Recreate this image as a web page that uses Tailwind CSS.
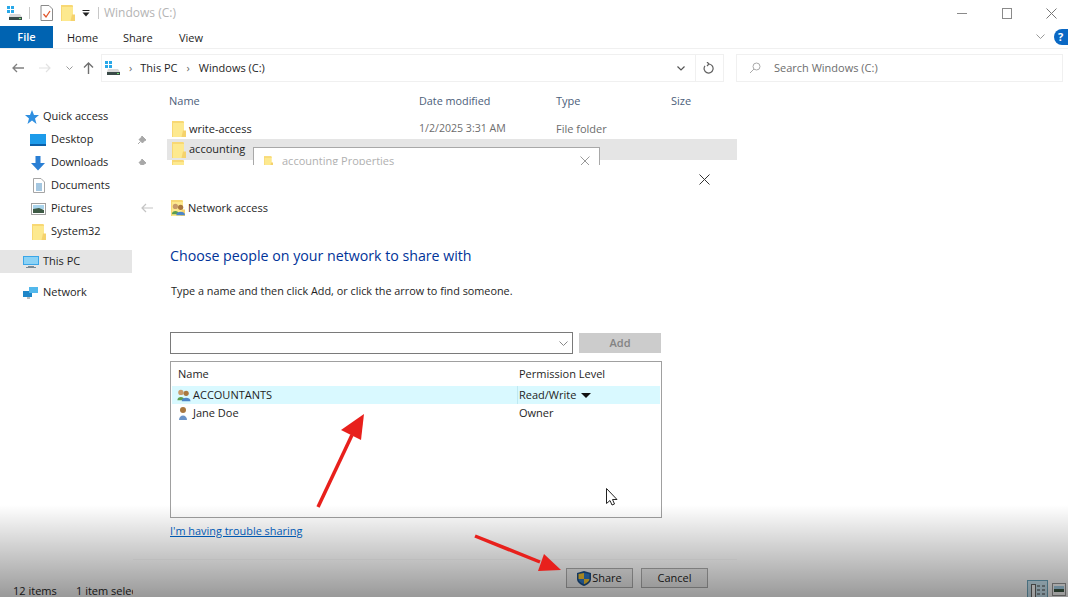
<!DOCTYPE html>
<html lang="en">
<head>
<meta charset="UTF-8">
<title>Windows (C:)</title>
<script src="https://cdn.jsdelivr.net/npm/@tailwindcss/browser@4"></script>
</head>
<body class="bg-white">
<svg class="hidden">
  <defs>
    <symbol id="folder" viewBox="0 0 14 16"><path d="M0 0H11L12 1V16H0Z" fill="#fde98f"/><path d="M0 0H11L12 1V2H1V16H0Z" fill="#f8d874"/><path d="M9.500 16H14V9.500H11Z" fill="#f5d26c"/></symbol>
    <symbol id="drive" viewBox="0 0 16 16"><rect x="0" y="1" width="3" height="3" fill="#29a8e8"/><rect x="4" y="1" width="3" height="3" fill="#29a8e8"/><rect x="0" y="5" width="3" height="3" fill="#29a8e8"/><rect x="4" y="5" width="3" height="3" fill="#29a8e8"/><path d="M3 9H13L15 12V15H2V12Z" fill="#d8d8d8"/><rect x="2" y="12" width="13" height="3" fill="#3a4a48"/><rect x="12" y="13" width="2" height="1" fill="#6fe06f"/></symbol>
    <symbol id="people" viewBox="0 0 16 16"><circle cx="5" cy="5" r="3" fill="#c79a6a"/><path d="M1 14C1 9 9 9 9 14Z" fill="#5d9e4e"/><circle cx="11" cy="6" r="3" fill="#a9773f"/><path d="M6 15C6 10 16 10 16 15Z" fill="#4d86c8"/></symbol>
  </defs>
</svg>

<div class="relative w-[1068px] h-[597px] overflow-hidden font-['Open_Sans','Noto_Sans',sans-serif] text-[11px] text-[#1e1e1e]">

  <!-- explorer window -->
  <div class="flex flex-col h-full">
    <!-- title bar -->
    <div class="h-[26px] flex items-center pl-[7px] shrink-0">
      <svg class="w-[16px] h-[16px]"><use href="#drive"/></svg>
      <div class="w-px h-[12px] bg-[#c8c8c8] ml-[6px]"></div>
      <svg class="w-[13px] h-[16px] ml-[10px]" viewBox="0 0 13 16"><path d="M1 .5H9L12.500 4V15.500H1Z" fill="#fff" stroke="#8a8a8a"/><path d="M3.500 9L6 12L10 6" fill="none" stroke="#e0562b" stroke-width="1.300"/></svg>
      <svg class="w-[14px] h-[16px] ml-[8px]"><use href="#folder"/></svg>
      <svg class="w-[8px] h-[7px] ml-[7px]" viewBox="0 0 8 7"><rect x="0.500" y="0" width="7" height="1" fill="#222"/><path d="M0.500 2.500H7.500L4 6.500Z" fill="#222"/></svg>
      <div class="w-px h-[12px] bg-[#c8c8c8] ml-[8px]"></div>
      <span class="ml-[5px] text-[#b4b4b4] text-[12px]">Windows (C:)</span>
      <div class="ml-auto flex items-center">
        <div class="w-[10px] h-px bg-[#8a8a8a] mr-[35px]"></div>
        <div class="w-[10px] h-[11px] border border-[#8a8a8a] mr-[34px]"></div>
        <svg class="w-[11px] h-[11px] mr-[11px]" viewBox="0 0 11 11"><path d="M0.500 0.500L10.500 10.500M10.500 0.500L0.500 10.500" stroke="#777" fill="none"/></svg>
      </div>
    </div>
    <!-- ribbon tabs -->
    <div class="h-[23px] flex items-center border-b border-[#f0f0f0] shrink-0">
      <div class="w-[53px] h-[22px] pt-px bg-[#0063b1] text-white font-semibold flex items-center justify-center">File</div>
      <span class="ml-[14px] mt-[2px] w-[56px]">Home</span>
      <span class="mt-[2px] w-[56px]">Share</span>
      <span class="mt-[2px]">View</span>
      <svg class="ml-auto w-[9px] h-[6px] mr-[9px]" viewBox="0 0 9 6"><path d="M.5 .5L4.500 4.500L8.500 .5" fill="none" stroke="#999"/></svg>
      <div class="w-[14px] h-[16px] rounded-l-full bg-[#0a68c4] text-white text-[11px] font-bold pl-[4px] leading-[16px]">?</div>
    </div>
    <!-- address bar -->
    <div class="h-[28px] mt-[5px] flex items-center shrink-0">
      <svg class="w-[12px] h-[10px] ml-[12px]" viewBox="0 0 12 10"><path d="M12 5H1M5 1L1 5L5 9" fill="none" stroke="#808080" stroke-width="1.300"/></svg>
      <svg class="w-[12px] h-[10px] ml-[15px]" viewBox="0 0 12 10"><path d="M0 5H11M7 1L11 5L7 9" fill="none" stroke="#e2e2e2" stroke-width="1.200"/></svg>
      <svg class="w-[7px] h-[5px] ml-[15px]" viewBox="0 0 7 5"><path d="M.5 .5L3.500 3.500L6.500 .5" fill="none" stroke="#999"/></svg>
      <svg class="w-[11px] h-[12px] ml-[10px]" viewBox="0 0 11 12"><path d="M5.500 12V1M1 5.500L5.500 1L10 5.500" fill="none" stroke="#707070" stroke-width="1.400"/></svg>
      <div class="ml-[7px] w-[623px] h-[28px] border border-[#f0f0f0] flex items-center pl-[3px]">
        <svg class="w-[16px] h-[16px]"><use href="#drive"/></svg>
        <span class="ml-[8px] text-[#666]">›</span>
        <span class="ml-[8px]">This PC</span>
        <span class="ml-[9px] text-[#666]">›</span>
        <span class="ml-[9px]">Windows (C:)</span>
        <svg class="ml-auto w-[8px] h-[5px]" viewBox="0 0 8 5"><path d="M.5 .5L4 4L7.500 .5" fill="none" stroke="#555" stroke-width="1.200"/></svg>
        <div class="w-px h-[26px] bg-[#f0f0f0] ml-[10px]"></div>
        <svg class="w-[11px] h-[12px] ml-[7px] mr-[9px]" viewBox="0 0 11 12"><path d="M5.500 2A4.500 4.500 0 1 1 2 3.800M4 0L6 2L4 4" fill="none" stroke="#606060" stroke-width="1.200"/></svg>
      </div>
      <div class="ml-[12px] w-[327px] h-[28px] border border-[#f0f0f0] flex items-center pl-[12px] text-[#6d6d6d]">
        <svg class="w-[12px] h-[12px]" viewBox="0 0 12 12"><circle cx="7.500" cy="4.500" r="3.500" fill="none" stroke="#aaa"/><path d="M5 7L1 11" stroke="#aaa"/></svg>
        <span class="ml-[13px]">Search Windows (C:)</span>
      </div>
    </div>
    <!-- body -->
    <div class="flex flex-1 min-h-0">
      <!-- sidebar -->
      <div class="w-[167px] shrink-0 pt-[23px]">
        <div class="h-[23px] flex items-center pl-[25px]">
          <svg class="w-[14px] h-[14px]" viewBox="0 0 14 14"><path d="M7 0L9 5H14L10 8.500L11.500 14L7 10.500L2.500 14L4 8.500L0 5H5Z" fill="#2f8fe0"/></svg>
          <span class="ml-[4px]">Quick access</span>
        </div>
        <div class="h-[23px] flex items-center pl-[30px]">
          <div class="w-[16px] h-[12px] bg-[#1d9bea] border-b-2 border-[#0b5fa8]"></div>
          <span class="ml-[5px] w-[86px]">Desktop</span>
          <svg class="w-[10px] h-[10px]" viewBox="0 0 10 10"><path d="M5 1L9 5L7 6L5.500 8L2 4.500L4 3ZM3.500 6.500L1 9" fill="#a8a8a8" stroke="#a8a8a8"/></svg>
        </div>
        <div class="h-[23px] flex items-center pl-[30px]">
          <svg class="w-[16px] h-[16px]" viewBox="0 0 16 16"><path d="M5.500 1H10.500V8H15L8 15.500L1 8H5.500Z" fill="#2a7fd4"/></svg>
          <span class="ml-[5px] w-[86px]">Downloads</span>
          <svg class="w-[10px] h-[10px]" viewBox="0 0 10 10"><path d="M5 1L9 5L7 6L5.500 8L2 4.500L4 3ZM3.500 6.500L1 9" fill="#a8a8a8" stroke="#a8a8a8"/></svg>
        </div>
        <div class="h-[23px] flex items-center pl-[33px]">
          <svg class="w-[12px] h-[15px]" viewBox="0 0 12 15"><path d="M.5 .5H8L11.500 4V14.500H.5Z" fill="#fff" stroke="#a5a5a5"/><path d="M3 6H9M3 8H9M3 10H9M3 12H9" stroke="#4a8fc2"/></svg>
          <span class="ml-[6px]">Documents</span>
        </div>
        <div class="h-[23px] flex items-center pl-[31px]">
          <svg class="w-[15px] h-[12px]" viewBox="0 0 15 12"><rect x=".5" y=".5" width="14" height="11" fill="#fff" stroke="#a0a0a0"/><rect x="2" y="2" width="11" height="4" fill="#a9d4ec"/><path d="M2 6L8 5L13 7V10H2Z" fill="#3d5a45"/></svg>
          <span class="ml-[5px]">Pictures</span>
        </div>
        <div class="h-[23px] flex items-center pl-[32px]">
          <svg class="w-[14px] h-[16px]"><use href="#folder"/></svg>
          <span class="ml-[5px]">System32</span>
        </div>
        <div class="h-[23px] mt-[7px] w-[132px] bg-[#e5e5e5] flex items-center pl-[23px]">
          <svg class="w-[16px] h-[14px]" viewBox="0 0 16 14"><rect x="0" y="1" width="16" height="9" fill="#3aa6e8"/><rect x="1" y="2" width="14" height="7" fill="#8cd2f5"/><rect x="5" y="11" width="6" height="1" fill="#7a8a95"/><rect x="3" y="12" width="10" height="1" fill="#7a8a95"/></svg>
          <span class="ml-[4px]">This PC</span>
        </div>
        <div class="h-[23px] mt-[8px] flex items-center pl-[23px]">
          <svg class="w-[16px] h-[14px]" viewBox="0 0 16 14"><rect x="0" y="5" width="9" height="6" fill="#1e86c8"/><rect x="6" y="1" width="9" height="6" fill="#52b8ec"/><path d="M4 12H7" stroke="#777"/></svg>
          <span class="ml-[4px]">Network</span>
        </div>
      </div>
      <!-- file list -->
      <div class="flex-1 min-w-0 pt-[11px]">
        <div class="flex h-[16px] items-center text-[#4c607a]">
          <span class="ml-[2px] w-[250px]">Name</span>
          <span class="w-[137px] text-[10.800px]">Date modified</span>
          <span class="w-[115px]">Type</span>
          <span>Size</span>
        </div>
        <div class="h-[20px] mt-[10px] flex items-center">
          <svg class="w-[14px] h-[16px] ml-[5px]"><use href="#folder"/></svg>
          <span class="ml-[3px] w-[230px]">write-access</span>
          <span class="w-[137px] text-[#6d6d6d] text-[10.600px]">1/2/2025 3:31 AM</span>
          <span class="text-[#6d6d6d]">File folder</span>
        </div>
        <div class="h-[21px] w-[570px] bg-[#e5e5e5] flex items-center">
          <svg class="w-[14px] h-[16px] ml-[5px]"><use href="#folder"/></svg>
          <span class="ml-[3px] w-[230px]">accounting</span>
        </div>
        <svg class="w-[14px] h-[16px] ml-[5px]"><use href="#folder"/></svg>
      </div>
    </div>
    <!-- status bar -->
    <div class="h-[16px] flex items-center shrink-0 pl-[13px]">
      <span class="w-[63px] mt-[5px]">12 items</span>
      <span class="mt-[5px]">1 item selected</span>
      <svg class="ml-auto w-[21px] h-[18px] mr-[4px]" viewBox="0 0 21 18"><rect x=".5" y=".5" width="20" height="17" fill="#cde8f5" stroke="#6ea8c0"/><rect x="4.500" y="4.500" width="4" height="13" fill="#fff" stroke="#666"/><path d="M10 6H13M15 6H18M10 10H13M15 10H18M10 14H13M15 14H18" stroke="#444"/></svg>
      <svg class="w-[14px] h-[13px] mr-[2px]" viewBox="0 0 14 13"><rect x=".5" y=".5" width="13" height="12" fill="#fff" stroke="#999"/><rect x="2" y="3" width="10" height="3" fill="#a9d4ec"/><rect x="2" y="6" width="10" height="3" fill="#3d5a45"/></svg>
    </div>
  </div>

  <!-- properties window behind the dialog -->
  <div class="absolute left-[253px] top-[147px] w-[347px] h-[18px] bg-white border-x border-t border-[#a8a8a8] flex items-center pl-[10px] pt-[9px] text-[#b0b0b0]">
    <svg class="w-[9px] h-[11px]"><use href="#folder"/></svg>
    <span class="ml-[9px]">accounting Properties</span>
    <svg class="ml-auto mr-[9px] w-[10px] h-[10px]" viewBox="0 0 10 10"><path d="M.5 .5L9.500 9.500M9.500 .5L.5 9.500" stroke="#999" fill="none"/></svg>
  </div>

  <!-- network access dialog -->
  <div class="absolute left-[133px] top-[165px] w-[604px] h-[432px] bg-white flex flex-col">
    <svg class="absolute left-[566px] top-[9px] w-[11px] h-[11px]" viewBox="0 0 11 11"><path d="M.5 .5L10.500 10.500M10.500 .5L.5 10.500" stroke="#333" fill="none"/></svg>
    <div class="flex items-center h-[16px] mt-[35px]">
      <svg class="w-[12px] h-[10px] ml-[8px]" viewBox="0 0 12 10"><path d="M12 5H1M5 1L1 5L5 9" fill="none" stroke="#c4c4c4" stroke-width="1.200"/></svg>
      <div class="relative w-[14px] h-[16px] ml-[18px]">
        <svg class="w-[14px] h-[16px]"><use href="#folder"/></svg>
        <svg class="absolute left-0 top-[2px] w-[14px] h-[14px]"><use href="#people"/></svg>
      </div>
      <span class="ml-[3px] text-[11px]">Network access</span>
    </div>
    <h1 class="ml-[37px] mt-[29px] text-[#003399] text-[14.200px] leading-[22px]">Choose people on your network to share with</h1>
    <p class="ml-[38px] mt-[16px] leading-[16px] text-[10.850px]">Type a name and then click Add, or click the arrow to find someone.</p>
    <div class="flex ml-[37px] mt-[33px]">
      <div class="w-[403px] h-[22px] border border-[#7a7a7a] flex items-center justify-end pr-[4px]">
        <svg class="w-[9px] h-[5px]" viewBox="0 0 9 5"><path d="M.5 .5L4.500 4.500L8.500 .5" fill="none" stroke="#888"/></svg>
      </div>
      <div class="ml-[6px] mt-px w-[82px] h-[20px] bg-[#cccccc] text-[#838383] font-semibold flex items-center justify-center">Add</div>
    </div>
    <div class="ml-[37px] mt-[7px] w-[492px] h-[157px] border border-[#a0a0a0] pt-[5px] pl-[1px] pr-px">
      <div class="flex h-[15px] items-center pl-[6px]">
        <span class="w-[341px]">Name</span><span>Permission Level</span>
      </div>
      <div class="flex h-[18px] mt-[4px] items-center bg-[#d9f9ff] pl-[4px]">
        <svg class="w-[15px] h-[14px]"><use href="#people"/></svg>
        <span class="ml-[2px] w-[324px]">ACCOUNTANTS</span>
        <span class="border-l border-[#bfe9f2] pl-px leading-[18px]">Read/Write</span>
        <svg class="ml-[5px] w-[10px] h-[5px]" viewBox="0 0 10 5"><path d="M0 0H10L5 5Z" fill="#111"/></svg>
      </div>
      <div class="flex h-[18px] items-center pl-[5px]">
        <svg class="w-[12px] h-[14px]" viewBox="0 0 12 14"><circle cx="6" cy="4" r="3" fill="#a9773f"/><path d="M2 14C2 8 10 8 10 14Z" fill="#6b93c8"/></svg>
        <span class="ml-[4px] w-[326px]">Jane Doe</span>
        <span>Owner</span>
      </div>
    </div>
    <a class="ml-[37px] mt-[5px] w-max leading-[16px] text-[#0066cc] underline text-[10.900px]">I'm having trouble sharing</a>
    <div class="mt-[20px] h-px bg-[#f8f8f8]"></div>
    <div class="flex mt-[8px] pl-[433px]">
      <div class="w-[67px] h-[20px] bg-[#f0f0f0] border border-[#adadad] flex items-center justify-center">
        <svg class="w-[14px] h-[15px]" viewBox="0 0 14 15"><path d="M7 0L14 2V8C14 11 11 13.500 7 15C3 13.500 0 11 0 8V2Z" fill="#1c4f87"/><path d="M7 2V8H1.500V3ZM7 8H12.500C12.300 10.500 10 12 7 13.200Z" fill="#f2c230"/><path d="M7 2L12.500 3V8H7ZM7 8V13.200C4 12 1.700 10.500 1.500 8Z" fill="#2f78c4"/></svg>
        <span class="ml-px">Share</span>
      </div>
      <div class="ml-[8px] w-[67px] h-[20px] bg-[#f0f0f0] border border-[#adadad] flex items-center justify-center">Cancel</div>
    </div>
  </div>

  <!-- video fade along the bottom -->
  <div class="absolute inset-x-0 bottom-0 h-[92px] bg-gradient-to-b from-black/0 to-black/40"></div>

  <!-- annotation arrows and pointer -->
  <svg class="absolute left-0 top-0 w-[1068px] h-[597px]" viewBox="0 0 1068 597">
    <path d="M318 507L352 435" stroke="#e8201c" stroke-width="3.500" fill="none"/>
    <path d="M364 414L341 430L361 440Z" fill="#e8201c"/>
    <path d="M475 536L540 562" stroke="#e8201c" stroke-width="3.500" fill="none"/>
    <path d="M561 570L544 554L538 571Z" fill="#e8201c"/>
    <path d="M606.500 488.500V503.500L610 500.500L612 505L614.500 504L612.500 499.500L617 499.500Z" fill="#fff" stroke="#222"/>
  </svg>
</div>
</body>
</html>
